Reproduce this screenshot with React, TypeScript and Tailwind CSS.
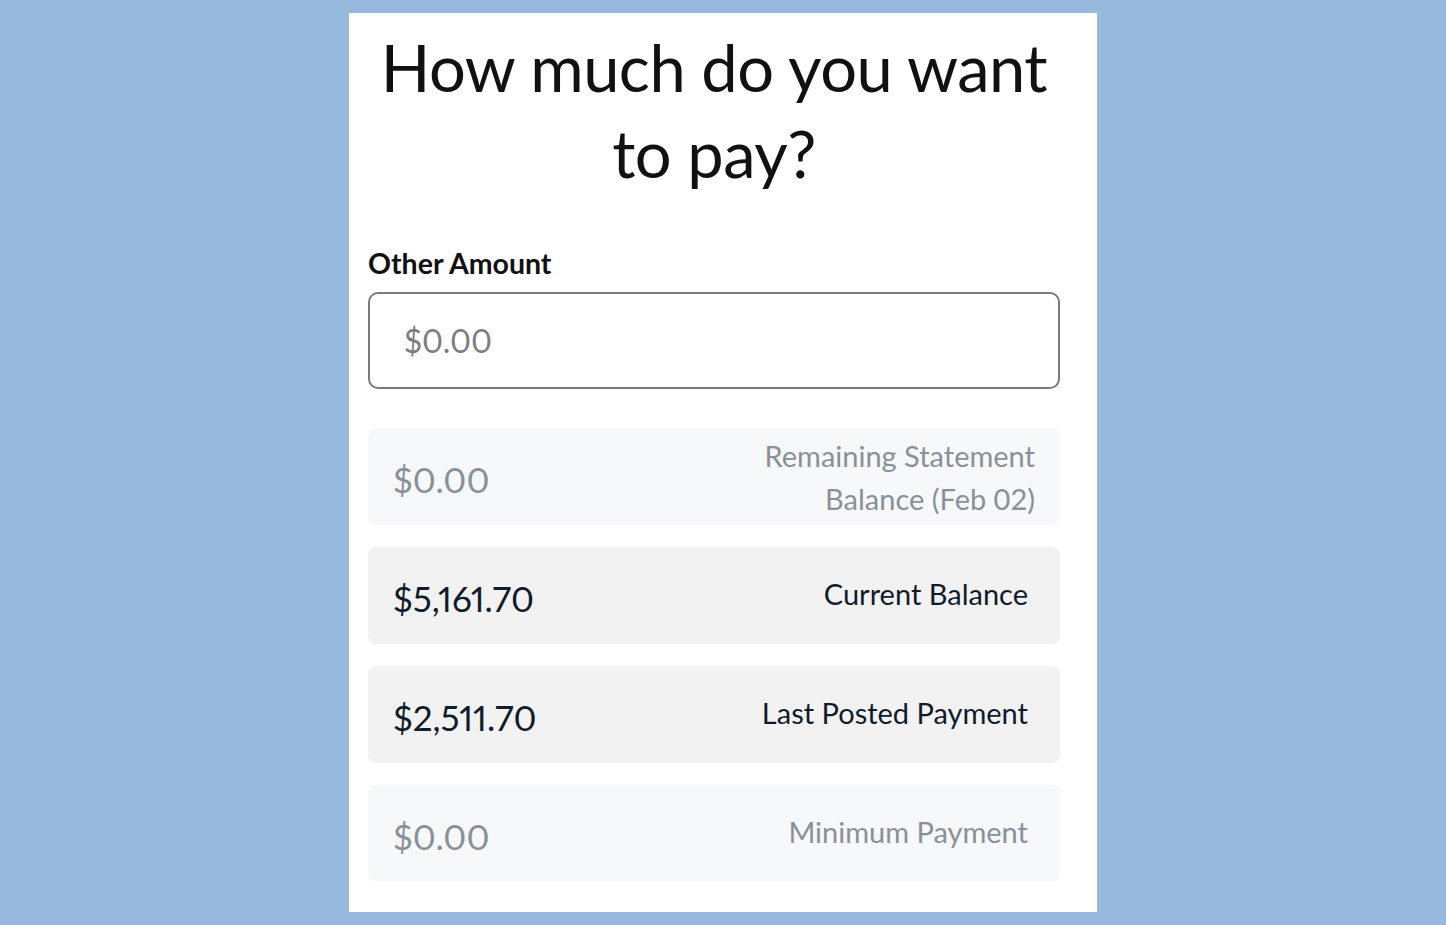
import React from "react";

const rows = [
  { amount: "$0.00", label: ["Remaining Statement", "Balance (Feb 02)"], muted: true, pr: "pr-[25px]" },
  { amount: "$5,161.70", label: ["Current Balance"], muted: false, pr: "pr-[32px]" },
  { amount: "$2,511.70", label: ["Last Posted Payment"], muted: false, pr: "pr-[32px]" },
  { amount: "$0.00", label: ["Minimum Payment"], muted: true, pr: "pr-[32px]" },
];

export default function App() {
  return (
    <div className="min-h-screen w-full bg-[#98b9de] flex justify-center pt-[13px] font-['Lato',sans-serif]">
      <div className="w-[748px] h-[899px] bg-white pl-[19px] pr-[37px] flex flex-col">
        {/* Title */}
        <h1 className="text-center text-[#111] text-[65px] leading-[86px] font-normal pt-[11px] tracking-[-0.5px]">
          How much do you want
          <br />
          to pay?
        </h1>

        {/* Other amount */}
        <label className="mt-[52px] text-[28.5px] leading-[30px] font-bold text-[#111]">Other Amount</label>
        <div className="mt-[14px] h-[97px] rounded-[10px] border-2 border-[#7a7a7a] flex items-center px-[34px]">
          <span className="text-[32px] text-[#7d7d7d] proportional-nums">$0.00</span>
        </div>

        {/* Options */}
        <div className="mt-[39px] flex flex-col gap-[22px]">
          {rows.map((r, i) => (
            <div
              key={i}
              className={`h-[97px] rounded-[8px] flex items-center justify-between pl-[25px] ${r.pr} ${
                r.muted ? "bg-[#f7f8f9]" : "bg-[#f2f2f3]"
              }`}
            >
              <span
                className={`text-[35px] pt-[6px] proportional-nums ${r.muted ? "text-[#87919a]" : "text-[#0f1c2b]"}`}
              >
                {r.amount}
              </span>
              <div
                className={`text-right text-[29px] leading-[43px] ${r.muted ? "text-[#87919a]" : "text-[#0f1c2b]"} ${
                  r.label.length === 1 ? "-mt-[4px]" : ""
                }`}
              >
                {r.label.map((l) => (
                  <div key={l}>{l}</div>
                ))}
              </div>
            </div>
          ))}
        </div>
      </div>
    </div>
  );
}
